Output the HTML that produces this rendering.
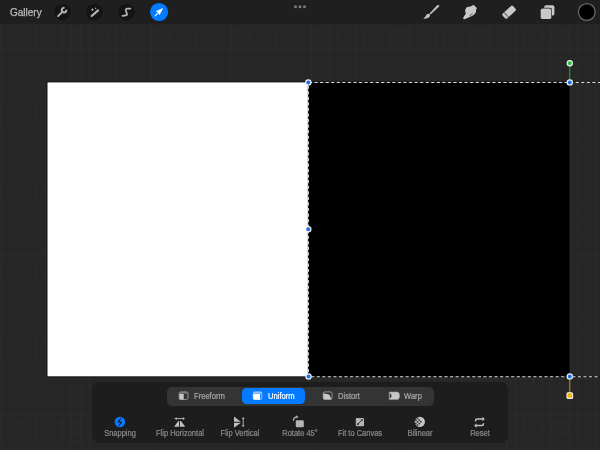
<!DOCTYPE html>
<html><head><meta charset="utf-8">
<style>
*{margin:0;padding:0;box-sizing:border-box}
html,body{width:600px;height:450px;overflow:hidden;background:#262626;font-family:"Liberation Sans",sans-serif;-webkit-font-smoothing:antialiased}
.gal{will-change:transform;-webkit-text-stroke:0.25px #bcbcbc}
.st,.lb{transform-origin:0 0;transform:scaleY(1.18);will-change:transform;-webkit-text-stroke:0.2px currentColor}
.abs{position:absolute}
svg{position:absolute;left:0;top:0}
#topbar{position:absolute;left:0;top:0;width:600px;height:24px;background:#1f1f1f}
.gal{position:absolute;left:10px;top:7px;font-size:10px;color:#bcbcbc;line-height:12px}
#white{position:absolute;left:47.5px;top:82.4px;width:260.8px;height:293.9px;background:#fff;box-shadow:0 0 2px 0.5px rgba(0,0,0,.35)}
#black{position:absolute;left:308.3px;top:82.4px;width:261px;height:293.9px;background:#000}
#panel{position:absolute;left:92px;top:382px;width:416px;height:61px;border-radius:8px;background:#1d1d1d}
#seg{position:absolute;left:167px;top:386.5px;width:267px;height:19px;border-radius:5px;background:#343434}
#uni{position:absolute;left:241.7px;top:388px;width:63.6px;height:16px;border-radius:4.5px;background:#037aff}
.st{position:absolute;font-size:7.6px;color:#a6a6a6;line-height:10px;top:390.5px;white-space:nowrap}
.lb{position:absolute;font-size:7.5px;color:#8a8a8a;line-height:10px;top:428.2px;white-space:nowrap;width:80px;text-align:center}
</style></head><body>
<svg width="600" height="450" style="z-index:0"><g fill="#2a2a2a"><rect x="-0.25" y="24" width="1.50" height="426"/><rect x="8.63" y="24" width="1.50" height="426"/><rect x="17.51" y="24" width="1.50" height="426"/><rect x="26.39" y="24" width="1.50" height="426"/><rect x="35.27" y="24" width="1.50" height="426"/><rect x="44.15" y="24" width="1.50" height="426"/><rect x="53.03" y="24" width="1.50" height="426"/><rect x="61.91" y="24" width="1.50" height="426"/><rect x="70.79" y="24" width="1.50" height="426"/><rect x="79.67" y="24" width="1.50" height="426"/><rect x="88.55" y="24" width="1.50" height="426"/><rect x="97.43" y="24" width="1.50" height="426"/><rect x="106.31" y="24" width="1.50" height="426"/><rect x="115.19" y="24" width="1.50" height="426"/><rect x="124.07" y="24" width="1.50" height="426"/><rect x="132.95" y="24" width="1.50" height="426"/><rect x="141.83" y="24" width="1.50" height="426"/><rect x="150.71" y="24" width="1.50" height="426"/><rect x="159.59" y="24" width="1.50" height="426"/><rect x="168.47" y="24" width="1.50" height="426"/><rect x="177.35" y="24" width="1.50" height="426"/><rect x="186.23" y="24" width="1.50" height="426"/><rect x="195.11" y="24" width="1.50" height="426"/><rect x="203.99" y="24" width="1.50" height="426"/><rect x="212.87" y="24" width="1.50" height="426"/><rect x="221.75" y="24" width="1.50" height="426"/><rect x="230.63" y="24" width="1.50" height="426"/><rect x="239.51" y="24" width="1.50" height="426"/><rect x="248.39" y="24" width="1.50" height="426"/><rect x="257.27" y="24" width="1.50" height="426"/><rect x="266.15" y="24" width="1.50" height="426"/><rect x="275.03" y="24" width="1.50" height="426"/><rect x="283.91" y="24" width="1.50" height="426"/><rect x="292.79" y="24" width="1.50" height="426"/><rect x="301.67" y="24" width="1.50" height="426"/><rect x="310.55" y="24" width="1.50" height="426"/><rect x="319.43" y="24" width="1.50" height="426"/><rect x="328.31" y="24" width="1.50" height="426"/><rect x="337.19" y="24" width="1.50" height="426"/><rect x="346.07" y="24" width="1.50" height="426"/><rect x="354.95" y="24" width="1.50" height="426"/><rect x="363.83" y="24" width="1.50" height="426"/><rect x="372.71" y="24" width="1.50" height="426"/><rect x="381.59" y="24" width="1.50" height="426"/><rect x="390.47" y="24" width="1.50" height="426"/><rect x="399.35" y="24" width="1.50" height="426"/><rect x="408.23" y="24" width="1.50" height="426"/><rect x="417.11" y="24" width="1.50" height="426"/><rect x="425.99" y="24" width="1.50" height="426"/><rect x="434.87" y="24" width="1.50" height="426"/><rect x="443.75" y="24" width="1.50" height="426"/><rect x="452.63" y="24" width="1.50" height="426"/><rect x="461.51" y="24" width="1.50" height="426"/><rect x="470.39" y="24" width="1.50" height="426"/><rect x="479.27" y="24" width="1.50" height="426"/><rect x="488.15" y="24" width="1.50" height="426"/><rect x="497.03" y="24" width="1.50" height="426"/><rect x="505.91" y="24" width="1.50" height="426"/><rect x="514.79" y="24" width="1.50" height="426"/><rect x="523.67" y="24" width="1.50" height="426"/><rect x="532.55" y="24" width="1.50" height="426"/><rect x="541.43" y="24" width="1.50" height="426"/><rect x="550.31" y="24" width="1.50" height="426"/><rect x="559.19" y="24" width="1.50" height="426"/><rect x="568.07" y="24" width="1.50" height="426"/><rect x="576.95" y="24" width="1.50" height="426"/><rect x="585.83" y="24" width="1.50" height="426"/><rect x="594.71" y="24" width="1.50" height="426"/><rect x="0" y="30.75" width="600" height="1.50"/><rect x="0" y="39.66" width="600" height="1.50"/><rect x="0" y="48.57" width="600" height="1.50"/><rect x="0" y="57.48" width="600" height="1.50"/><rect x="0" y="66.39" width="600" height="1.50"/><rect x="0" y="75.30" width="600" height="1.50"/><rect x="0" y="84.21" width="600" height="1.50"/><rect x="0" y="93.12" width="600" height="1.50"/><rect x="0" y="102.03" width="600" height="1.50"/><rect x="0" y="110.94" width="600" height="1.50"/><rect x="0" y="119.85" width="600" height="1.50"/><rect x="0" y="128.76" width="600" height="1.50"/><rect x="0" y="137.67" width="600" height="1.50"/><rect x="0" y="146.58" width="600" height="1.50"/><rect x="0" y="155.49" width="600" height="1.50"/><rect x="0" y="164.40" width="600" height="1.50"/><rect x="0" y="173.31" width="600" height="1.50"/><rect x="0" y="182.22" width="600" height="1.50"/><rect x="0" y="191.13" width="600" height="1.50"/><rect x="0" y="200.04" width="600" height="1.50"/><rect x="0" y="208.95" width="600" height="1.50"/><rect x="0" y="217.86" width="600" height="1.50"/><rect x="0" y="226.77" width="600" height="1.50"/><rect x="0" y="235.68" width="600" height="1.50"/><rect x="0" y="244.59" width="600" height="1.50"/><rect x="0" y="253.50" width="600" height="1.50"/><rect x="0" y="262.41" width="600" height="1.50"/><rect x="0" y="271.32" width="600" height="1.50"/><rect x="0" y="280.23" width="600" height="1.50"/><rect x="0" y="289.14" width="600" height="1.50"/><rect x="0" y="298.05" width="600" height="1.50"/><rect x="0" y="306.96" width="600" height="1.50"/><rect x="0" y="315.87" width="600" height="1.50"/><rect x="0" y="324.78" width="600" height="1.50"/><rect x="0" y="333.69" width="600" height="1.50"/><rect x="0" y="342.60" width="600" height="1.50"/><rect x="0" y="351.51" width="600" height="1.50"/><rect x="0" y="360.42" width="600" height="1.50"/><rect x="0" y="369.33" width="600" height="1.50"/><rect x="0" y="378.24" width="600" height="1.50"/><rect x="0" y="387.15" width="600" height="1.50"/><rect x="0" y="396.06" width="600" height="1.50"/><rect x="0" y="404.97" width="600" height="1.50"/><rect x="0" y="413.88" width="600" height="1.50"/><rect x="0" y="422.79" width="600" height="1.50"/><rect x="0" y="431.70" width="600" height="1.50"/><rect x="0" y="440.61" width="600" height="1.50"/><rect x="0" y="449.52" width="600" height="1.50"/></g></svg>
<div id="topbar">
  <div class="gal">Gallery</div>
</div>
<div id="panel"></div>
<div id="seg"></div>
<div id="uni"></div>
<div class="st" style="left:193.5px">Freeform</div>
<div class="st" style="left:267.7px;color:#fff">Uniform</div>
<div class="st" style="left:337.5px">Distort</div>
<div class="st" style="left:403.8px">Warp</div>
<div class="lb" style="left:80px">Snapping</div>
<div class="lb" style="left:140px">Flip Horizontal</div>
<div class="lb" style="left:200px">Flip Vertical</div>
<div class="lb" style="left:260px">Rotate 45°</div>
<div class="lb" style="left:320px">Fit to Canvas</div>
<div class="lb" style="left:380px">Bilinear</div>
<div class="lb" style="left:440px">Reset</div>
<svg width="600" height="450" style="z-index:5">
 <!-- top bar circles -->
 <g fill="#141414">
  <circle cx="62.5" cy="12.2" r="8.3"/>
  <circle cx="94.5" cy="12.2" r="8.3"/>
  <circle cx="126.5" cy="12.2" r="8.3"/>
 </g>
 <circle cx="159.1" cy="12" r="9.1" fill="#037aff"/>
 <!-- wrench -->
 <g fill="#b4b4b4" stroke="#b4b4b4">
  <line x1="58.1" y1="16.2" x2="62.6" y2="11.7" stroke-width="1.9" stroke-linecap="round"/>
  <path d="M66.3 9.7 A2.3 2.3 0 1 1 64.5 7.9" fill="none" stroke-width="2.0"/>
 </g>
 <!-- wand -->
 <g fill="#b4b4b4" stroke="#b4b4b4">
  <line x1="91.7" y1="16" x2="98.1" y2="10.4" stroke-width="2.1" stroke-linecap="round"/>
  <path d="M92.4 8.1 L93.0 9.2 L94.0 9.7 L93.0 10.2 L92.4 11.3 L91.8 10.2 L90.8 9.7 L91.8 9.2Z" stroke="none"/>
  <circle cx="95.6" cy="8.3" r="0.7" stroke="none"/>
 </g>
 <!-- selection S -->
 <path d="M130.4 8.6 L127.2 8.7 Q125.5 8.8 125.9 10.4 L126.9 13.9 Q127.2 15.2 125.8 15.4 L122.6 15.9" fill="none" stroke="#b4b4b4" stroke-width="1.8" stroke-linecap="round" stroke-linejoin="round"/>
 <!-- arrow -->
 <g fill="#fff" stroke="#fff">
  <path d="M163.2 7.9 L155.6 11.3 L158.3 12.6 L159.5 15.3Z" stroke="none"/>
  <line x1="158.6" y1="12.4" x2="155.2" y2="15.9" stroke-width="1.3" stroke-linecap="round"/>
 </g>
 <!-- three dots -->
 <g fill="#7a7a7a"><circle cx="295.5" cy="6.75" r="1.5"/><circle cx="300" cy="6.75" r="1.5"/><circle cx="304.5" cy="6.75" r="1.5"/></g>
 <!-- brush -->
 <g fill="#c4c4c4" stroke="#c4c4c4">
  <path d="M439.1 5.1 Q439.5 5.9 438.6 7.0 L430.5 14.4 L429.5 13.5 L436.9 5.6 Q438.3 4.5 439.1 5.1Z" stroke="none"/>
  <path d="M429.3 13.8 Q430.9 15.4 429.4 17.0 Q427.4 19.0 423.2 18.6 Q424.9 17.7 425.5 16.2 Q426.6 13.6 429.3 13.8Z" stroke="none"/>
 </g>
 <!-- smudge -->
 <path d="M473.1 5.0 Q473.5 4.8 474.9 6.1 L476.8 8.0 Q477.0 8.4 476.1 9.8 L475.9 12.3 Q475.6 13.4 473.3 15.3 L470.4 16.8 L465.2 19.1 Q463.8 19.6 463.3 18.4 Q463.0 17.5 463.7 16.8 L465.9 13.6 L465.0 10.9 Q465.2 9.0 466.7 7.3 L471.1 6.2Z" fill="#c8c8c8"/>
 <line x1="472.4" y1="13.3" x2="469.6" y2="16.2" stroke="#1f1f1f" stroke-width="0.7"/>
 <!-- eraser -->
 <g transform="translate(509.1 12.2) rotate(-42.6)">
  <rect x="-7.1" y="-3.3" width="14.2" height="6.6" rx="1.8" fill="#c8c8c8"/>
  <line x1="-3.9" y1="-3.5" x2="-3.9" y2="3.5" stroke="#1f1f1f" stroke-width="0.8"/>
 </g>
 <!-- layers -->
 <rect x="544.2" y="5.3" width="10.2" height="10.3" rx="1.9" fill="#c8c8c8"/>
 <rect x="540.0" y="7.7" width="12" height="12.1" rx="2.3" fill="#1f1f1f"/>
 <rect x="540.7" y="8.4" width="10.6" height="10.7" rx="1.9" fill="#c8c8c8"/>
 <!-- color -->
 <circle cx="586.8" cy="12" r="8.4" fill="#000" stroke="#6a6a6a" stroke-width="1.3"/>

 <!-- canvas -->
 <rect x="46.1" y="81.0" width="523.9" height="296.7" fill="#000" opacity="0.22"/>
 <rect x="46.8" y="81.7" width="522.5" height="295.3" fill="#000" opacity="0.3"/>
 <rect x="47.5" y="82.4" width="260.8" height="293.9" fill="#fff"/>
 <rect x="308.3" y="82.4" width="261" height="293.9" fill="#000"/>
 <!-- canvas dashes -->
 <g stroke="#121212" stroke-width="1.1" fill="none">
  <line x1="308.4" y1="82.5" x2="600" y2="82.5"/>
  <line x1="308.4" y1="376.7" x2="600" y2="376.7"/>
  <line x1="308.4" y1="82.5" x2="308.4" y2="376.7"/>
 </g>
 <g stroke="#d8d8d8" stroke-width="1.1" fill="none" stroke-dasharray="3.2 2.356">
  <line x1="308.94" y1="82.5" x2="600" y2="82.5"/>
  <line x1="311.09" y1="376.7" x2="600" y2="376.7"/>
  <line x1="308.4" y1="372.2" x2="308.4" y2="79" />
 </g>
 <line x1="569.8" y1="63.3" x2="569.8" y2="82.4" stroke="#23a23a" stroke-width="1"/>
 <line x1="569.8" y1="376.4" x2="569.8" y2="395.6" stroke="#c4901e" stroke-width="1"/>
 <g fill="#1a6ff2" stroke="#f0f0f0" stroke-width="1.2">
  <circle cx="308.3" cy="82.4" r="2.6"/>
  <circle cx="308.3" cy="229.2" r="2.6"/>
  <circle cx="308.5" cy="376.5" r="2.6"/>
  <circle cx="569.8" cy="82.4" r="2.6"/>
  <circle cx="569.8" cy="376.4" r="2.6"/>
 </g>
 <circle cx="569.8" cy="63.3" r="2.6" fill="#22c23c" stroke="#f0f0f0" stroke-width="1.2"/>
 <rect x="567.0" y="392.8" width="5.6" height="5.6" rx="1" fill="#f6b400" stroke="#f0f0f0" stroke-width="1.1"/>

 <!-- seg icons -->
 <!-- freeform -->
 <rect x="179.2" y="391.9" width="8.8" height="7.6" rx="1.6" fill="#333" stroke="#9a9a9a" stroke-width="0.9"/>
 <rect x="179.4" y="393.9" width="4.3" height="5.6" fill="#c8c8c8"/>
 <rect x="179.4" y="392.3" width="8.4" height="1.2" fill="#8a8a8a"/>
 <!-- uniform -->
 <rect x="253.2" y="391.9" width="8.6" height="7.6" rx="1.6" fill="#037aff" stroke="#a9cdfd" stroke-width="0.9"/>
 <rect x="253.4" y="392.3" width="8.2" height="1.3" fill="#b8d6ff"/>
 <rect x="253.3" y="394.0" width="6.8" height="5.6" fill="#fff"/>
 <!-- distort -->
 <rect x="323.2" y="391.9" width="8.8" height="7.6" rx="1.6" fill="#333" stroke="#9a9a9a" stroke-width="0.9"/>
 <path d="M323.4 393.2 L329.2 394.6 L331.6 399.3 L323.4 399.3Z" fill="#c8c8c8"/>
 <!-- warp -->
 <path d="M389.2 392.0 L397.2 392.0 Q399.6 392.2 399.6 395.8 Q399.6 399.4 397.2 399.6 L389.2 399.6Z" fill="#c8c8c8" stroke="#9a9a9a" stroke-width="0.6"/>
 <path d="M389.8 392.9 Q393.4 395.7 389.8 398.5Z" fill="#333"/>

 <!-- snapping -->
 <circle cx="119.9" cy="422" r="5.3" fill="#037aff"/>
 <polyline points="120.8,418.4 118.2,421.6 121.3,422.4 118.8,425.8" fill="none" stroke="#1d1d1d" stroke-width="1.1" stroke-linejoin="miter"/>
 <!-- flip horizontal -->
 <g fill="#c0c0c0" stroke="#c0c0c0">
  <line x1="175.6" y1="418.6" x2="183.8" y2="418.6" stroke-width="0.9"/>
  <path d="M174.4 418.6 L176.6 417.2 L176.6 420.0Z" stroke="none"/>
  <path d="M185 418.6 L182.8 417.2 L182.8 420.0Z" stroke="none"/>
  <path d="M174.1 426.8 L178.3 420.9 L179.1 420.9 L179.1 426.8Z" stroke="none"/>
  <path d="M185.2 426.8 L181.0 420.9 L180.0 420.9 L180.0 426.8Z" stroke="none"/>
 </g>
 <!-- flip vertical -->
 <g fill="#c0c0c0" stroke="#c0c0c0">
  <path d="M234 416.4 L240.8 421.7 L234 421.7Z" stroke="none"/>
  <path d="M234 422.8 L240.8 422.8 L234 427.8Z" stroke="none"/>
  <line x1="243.2" y1="418.4" x2="243.2" y2="425.8" stroke-width="0.9"/>
  <path d="M243.2 417.0 L241.9 419.0 L244.5 419.0Z" stroke="none"/>
  <path d="M243.2 427.2 L241.9 425.2 L244.5 425.2Z" stroke="none"/>
 </g>
 <!-- rotate -->
 <rect x="295.8" y="420.3" width="8" height="7" rx="1.2" fill="#b4b4b4"/>
 <path d="M293.4 420.7 Q293.5 417.6 296.6 416.9" fill="none" stroke="#b4b4b4" stroke-width="1.2"/>
 <path d="M298.5 416.9 L296.2 415.3 L296.2 418.5Z" fill="#b4b4b4"/>
 <!-- fit to canvas -->
 <rect x="355.8" y="418" width="8.2" height="8.2" rx="1" fill="#b4b4b4"/>
 <line x1="357.6" y1="424.4" x2="362.2" y2="419.8" stroke="#1d1d1d" stroke-width="0.9"/>
 <path d="M357.1 424.9 L357.4 422.9 L359.1 424.6Z" fill="#1d1d1d"/>
 <path d="M362.7 419.3 L362.4 421.3 L360.7 419.6Z" fill="#1d1d1d"/>
 <!-- bilinear -->
 <circle cx="419.85" cy="421.85" r="5.15" fill="#c4c4c4"/>
 <g fill="#3a3a3a"><rect x="416.62" y="417.73" width="1.7" height="1.6"/><rect x="418.35" y="419.33" width="1.7" height="1.6"/><rect x="416.62" y="420.93" width="1.7" height="1.6"/><rect x="420.05" y="420.93" width="1.7" height="1.6"/><rect x="418.35" y="422.67" width="1.7" height="1.6"/><rect x="416.62" y="424.27" width="1.7" height="1.6"/><rect x="414.90" y="419.33" width="1.7" height="1.6"/><rect x="414.90" y="422.67" width="1.7" height="1.6"/></g>
 <!-- reset -->
 <g fill="none" stroke="#c0c0c0" stroke-width="1.5">
  <path d="M475.6 421.6 L475.6 420.6 Q475.6 419.1 477.1 419.1 L482.8 419.1"/>
  <path d="M483.4 423.2 L483.4 424.1 Q483.4 425.6 481.9 425.6 L476.2 425.6"/>
 </g>
 <g fill="#c0c0c0">
  <path d="M484.9 419.1 L482.3 417.0 L482.3 421.2Z"/>
  <path d="M474.0 425.6 L476.6 423.5 L476.6 427.7Z"/>
 </g>
</svg>
</body></html>
